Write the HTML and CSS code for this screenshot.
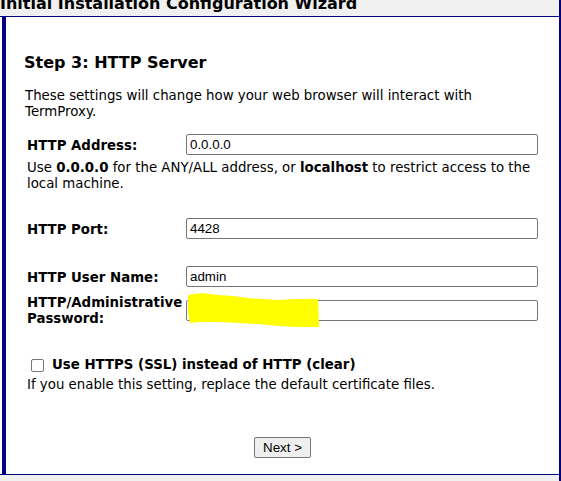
FILE: index.html
```html
<!DOCTYPE html>
<html>
<head>
<meta charset="utf-8">
<title>Initial Installation Configuration Wizard</title>
<link rel="stylesheet" href="styles.css">
</head>
<body>
<div class="page">
  <div class="titlebar"><h1 class="title">Initial Installation Configuration Wizard</h1></div>
  <div class="frame">
    <div class="panel">
      <h2 class="step">Step 3: HTTP Server</h2>
      <p class="intro">These settings will change how your web browser will interact with TermProxy.</p>
      <div class="form">
        <div class="row">
          <label class="lbl">HTTP Address:</label>
          <input class="field" type="text" value="0.0.0.0">
        </div>
        <p class="help">Use <b>0.0.0.0</b> for the ANY/ALL address, or <b>localhost</b> to restrict access to the local machine.</p>
        <div class="row row-port">
          <label class="lbl">HTTP Port:</label>
          <input class="field" type="text" value="4428">
        </div>
        <div class="row row-user">
          <label class="lbl">HTTP User Name:</label>
          <input class="field" type="text" value="admin">
        </div>
        <div class="row row-pass">
          <label class="lbl">HTTP/Administrative Password:</label>
          <input class="field" type="password" value="">
        </div>
        <div class="check-row">
          <input class="check" type="checkbox">
          <span class="check-label">Use HTTPS (SSL) instead of HTTP (clear)</span>
        </div>
        <p class="note">If you enable this setting, replace the default certificate files.</p>
      </div>
      <div class="actions"><button class="btn" type="button">Next &gt;</button></div>
      <svg class="scribble" width="134" height="36" viewBox="0 0 134 36">
        <polygon fill="#ffff00" points="0,2 14,0 30,2 45,3 60,5 75,6 90,7 105,6 130,6 131,34 110,34 90,33 70,31 50,30 30,29 12,29 2,30 0,20"/>
      </svg>
    </div>
  </div>
</div>
</body>
</html>
```
FILE: styles.css
```css
html, body {
  margin: 0;
  padding: 0;
}
body {
  overflow: hidden;
  font-family: "DejaVu Sans", Verdana, sans-serif;
  color: #000;
}
.page {
  width: 561px;
  height: 481px;
  box-sizing: border-box;
  border-right: 2px solid #000080;
  background: #f0f0f0;
  overflow: hidden;
}
.titlebar {
  height: 16px;
  overflow: hidden;
}
.title {
  margin: -4px 0 0 0;
  font-size: 16px;
  line-height: 16px;
  font-weight: bold;
  white-space: nowrap;
}
.frame {
  border-top: 1px solid #000080;
  border-bottom: 1px solid #000080;
  background: #fff;
}
.panel {
  position: relative;
  margin-left: 2px;
  border-left: 4px solid #000080;
  padding: 36px 20px 16px 19px;
  font-size: 13.33px;
  line-height: 16px;
}
.step {
  margin: 0 0 0 -1px;
  font-size: 16px;
  line-height: 19px;
  font-weight: bold;
}
.intro {
  margin: 16px 0 0 0;
}
.form {
  margin-top: 14px;
  padding-left: 2px;
}
.row {
  display: grid;
  grid-template-columns: 159px 352px;
  align-items: center;
}
.lbl {
  font-weight: bold;
  padding-top: 2px;
}
.field {
  box-sizing: border-box;
  width: 352px;
  height: 21px;
  margin: 0;
  padding: 0 3px;
  border: 1px solid #767676;
  border-radius: 2px;
  font-family: "Liberation Sans", Arial, sans-serif;
  font-size: 13.33px;
  color: #000;
  background: #fff;
}
.help {
  margin: 5px 0 0 0;
}
.row-port {
  margin-top: 26px;
}
.row-user {
  margin-top: 27px;
}
.row-pass {
  margin-top: 6px;
}
.check-row {
  display: flex;
  align-items: flex-start;
  margin-top: 30px;
}
.check {
  appearance: none;
  -webkit-appearance: none;
  box-sizing: border-box;
  width: 13px;
  height: 13px;
  margin: 2px 8px 0 4px;
  border: 1px solid #767676;
  border-radius: 2px;
  background: #fff;
}
.check-label {
  font-weight: bold;
}
.note {
  margin: 4px 0 0 0;
}
.actions {
  margin-top: 44px;
  display: flex;
  justify-content: center;
  margin-left: -19px;
  margin-right: -20px;
}
.btn {
  box-sizing: border-box;
  height: 21px;
  padding: 0 8px;
  border: 1px solid #767676;
  border-radius: 2px;
  background: #efefef;
  font-family: "Liberation Sans", Arial, sans-serif;
  font-size: 13.33px;
  color: #000;
}
.scribble {
  position: absolute;
  left: 182px;
  top: 276px;
}
```
